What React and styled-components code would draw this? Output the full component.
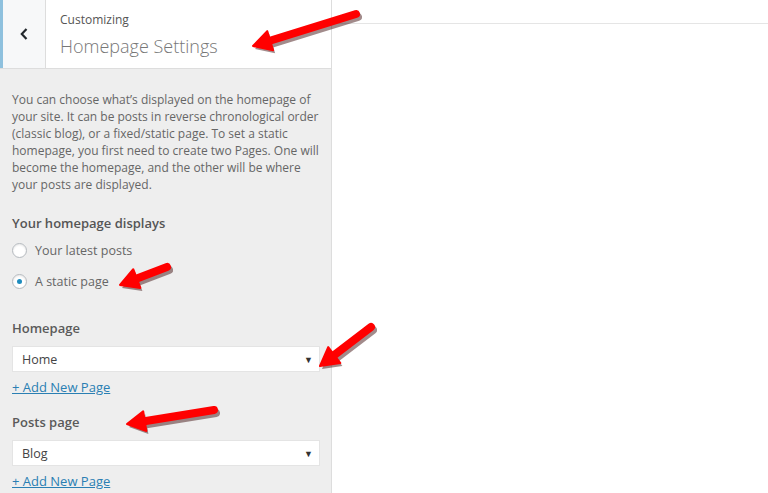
import React from 'react'
import styled, { createGlobalStyle } from 'styled-components'

const GlobalStyle = createGlobalStyle`
  html, body {
    margin: 0;
    padding: 0;
    background: #fff;
  }
  body {
    font-family: "Open Sans", "Noto Sans", sans-serif;
    color: #555;
  }
`

const arrows = [
   { from: [356, 14], to: [253, 46] },
   { from: [167, 267], to: [120, 285] },
   { from: [371, 327], to: [320, 366] },
   { from: [214, 410], to: [127, 424] },
]

const Arrow = ({ from, to }) => {
   const [x1, y1] = from
   const [x2, y2] = to
   const dx = x2 - x1
   const dy = y2 - y1
   const len = Math.sqrt(dx * dx + dy * dy)
   const ux = dx / len
   const uy = dy / len
   const px = -uy
   const py = ux
   const head = 18
   const half = 10
   const bx = x2 - ux * head
   const by = y2 - uy * head
   const pts = `${x2},${y2} ${bx + px * half},${by + py * half} ${bx - px * half},${by - py * half}`
   return (
      <g>
         <g transform="translate(2,3)" opacity="0.45">
            <line x1={x1} y1={y1} x2={bx + ux * 2} y2={by + uy * 2} stroke="#300" strokeWidth="8" strokeLinecap="round" />
            <polygon points={pts} fill="#300" />
         </g>
         <line x1={x1} y1={y1} x2={bx + ux * 2} y2={by + uy * 2} stroke="#f00" strokeWidth="8" strokeLinecap="round" />
         <polygon points={pts} fill="#f00" strokeLinejoin="round" stroke="#f00" strokeWidth="2" />
      </g>
   )
}

const Field = ({ label, value }) => (
   <FieldBlock>
      <FieldLabel>{label}</FieldLabel>
      <Select>
         <span>{value}</span>
         <Caret>▼</Caret>
      </Select>
      <AddLink href="#">+ Add New Page</AddLink>
   </FieldBlock>
)

const App = () => {
   return (
      <Page>
         <GlobalStyle />
         <Sidebar>
            <Header>
               <BackButton>
                  <svg width="10" height="14" viewBox="0 0 10 14">
                     <path d="M7.5 2 L2.8 7 L7.5 12" fill="none" stroke="#23282d" strokeWidth="2.2" />
                  </svg>
               </BackButton>
               <Titles>
                  <Small>Customizing</Small>
                  <Title>Homepage Settings</Title>
               </Titles>
            </Header>
            <Body>
               <Description>
                  You can choose what’s displayed on the homepage of your site. It can be posts in reverse chronological order (classic blog), or a fixed/static page. To set a static homepage, you first need to create two Pages. One will become the homepage, and the other will be where your posts are displayed.
               </Description>
               <GroupTitle>Your homepage displays</GroupTitle>
               <RadioRow first>
                  <Radio />
                  <span>Your latest posts</span>
               </RadioRow>
               <RadioRow>
                  <Radio checked />
                  <span>A static page</span>
               </RadioRow>
               <Fields>
                  <Field label="Homepage" value="Home" />
                  <Field label="Posts page" value="Blog" />
               </Fields>
            </Body>
         </Sidebar>
         <Preview>
            <TopBar />
         </Preview>
         <Overlay width="768" height="493" viewBox="0 0 768 493">
            {arrows.map((a, i) => <Arrow key={i} {...a} />)}
         </Overlay>
      </Page>
   )
}

const Page = styled.div`
   position: relative;
   display: flex;
   width: 768px;
   height: 493px;
   overflow: hidden;
`

const Sidebar = styled.div`
   width: 331px;
   flex-shrink: 0;
   background: #eee;
   border-right: 1px solid #ddd;
   display: flex;
   flex-direction: column;
`

const Header = styled.div`
   display: flex;
   height: 68px;
   background: #fff;
   border-bottom: 1px solid #ddd;
`

const BackButton = styled.div`
   width: 42px;
   flex-shrink: 0;
   border-left: 3px solid #8fc1de;
   border-right: 1px solid #ddd;
   background: #f7f8f9;
   display: flex;
   align-items: center;
   justify-content: center;
`

const Titles = styled.div`
   padding: 11px 0 0 14px;
   display: flex;
   flex-direction: column;
`

const Small = styled.span`
   font-size: 12px;
   line-height: 18px;
   color: #555;
`

const Title = styled.span`
   font-size: 18px;
   font-weight: 300;
   line-height: 28px;
   margin-top: 3px;
   color: #777;
`

const Body = styled.div`
   padding: 22px 12px 0 12px;
`

const Description = styled.p`
   margin: 0;
   font-size: 12px;
   line-height: 17px;
   color: #666;
   width: 310px;
`

const GroupTitle = styled.div`
   margin-top: 21px;
   font-size: 13px;
   font-weight: 600;
   color: #555;
   line-height: 18px;
`

const RadioRow = styled.div`
   display: flex;
   align-items: center;
   gap: 8px;
   height: 18px;
   margin-top: ${p => (p.first ? '9px' : '13px')};
   font-size: 12.5px;
   color: #666;
`

const Radio = styled.span`
   width: 13px;
   height: 13px;
   border-radius: 50%;
   border: 1px solid #b4b9be;
   background: #fff;
   box-shadow: inset 0 1px 2px rgba(0, 0, 0, 0.1);
   display: flex;
   align-items: center;
   justify-content: center;
   &::after {
      content: '';
      width: 5px;
      height: 5px;
      border-radius: 50%;
      background: ${p => (p.checked ? '#1e8cbe' : 'transparent')};
   }
`

const Fields = styled.div`
   margin-top: 29px;
   display: flex;
   flex-direction: column;
   gap: 17px;
`

const FieldBlock = styled.div`
   display: flex;
   flex-direction: column;
`

const FieldLabel = styled.div`
   font-size: 13px;
   font-weight: 600;
   line-height: 18px;
   color: #5a5a5a;
`

const Select = styled.div`
   margin-top: 9px;
   width: 308px;
   height: 26px;
   box-sizing: border-box;
   background: #fff;
   border: 1px solid #e4e4e4;
   display: flex;
   align-items: center;
   justify-content: space-between;
   padding: 0 6px 0 9px;
   font-size: 12.5px;
   color: #444;
`

const Caret = styled.span`
   font-size: 9px;
   color: #333;
`

const AddLink = styled.a`
   margin-top: 6px;
   font-size: 13px;
   color: #2a7fb3;
   text-decoration: underline;
   line-height: 18px;
`

const Preview = styled.div`
   flex: 1;
   background: #fff;
`

const TopBar = styled.div`
   height: 23px;
   border-bottom: 1px solid #e5e5e5;
`

const Overlay = styled.svg`
   position: absolute;
   top: 0;
   left: 0;
   pointer-events: none;
`

export default App
